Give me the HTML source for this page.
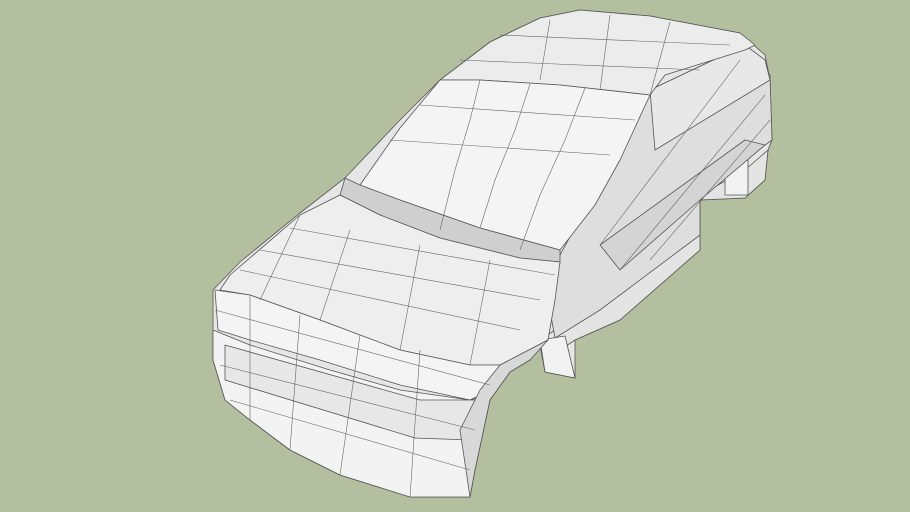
<!DOCTYPE html>
<html><head><meta charset="utf-8"><style>
html,body{margin:0;padding:0;background:#b3bf9e;}
svg{display:block}
</style></head><body>
<svg width="910" height="512" viewBox="0 0 910 512" xmlns="http://www.w3.org/2000/svg">
<rect width="910" height="512" fill="#b3bf9e"/>
<polygon points="213,290 240,262 300,213 345,178 400,120 440,80 490,42 540,18 580,10 650,16 740,33 765,55 770,80 772,140 768,150 765,180 745,198 700,200 700,250 620,320 575,340 575,378 545,372 540,345 530,360 510,372 490,400 475,470 470,497 410,497 340,475 290,450 250,420 225,400 213,360" fill="#e6e6e6" stroke="#555" stroke-width="0.8"/>
<g stroke="#555" stroke-width="0.8" stroke-linejoin="round">
<polygon points="700,195 745,170 768,150 765,180 745,198 700,200 700,250 620,320 575,340 560,350 575,378 545,372 540,340 600,300 700,230" fill="#e4e4e4"/>
<polygon points="725,168 748,160 748,195 725,195" fill="#f2f2f2"/>
<polygon points="540,340 565,336 575,378 545,372" fill="#f2f2f2"/>
<polygon points="560,255 650,90 745,45 770,75 772,140 745,160 700,200 700,235 600,310 555,338 548,300" fill="#dedede"/>
<polygon points="650,90 745,45 765,60 770,80 655,150" fill="#e8e8e8"/>
<polygon points="600,245 745,140 765,145 700,200 620,270" fill="#d4d4d4"/>
<polygon points="440,80 490,42 540,18 580,10 650,16 740,33 755,45 745,50 665,75 650,95 560,85 480,80" fill="#ececec"/>
<polygon points="360,185 400,128 440,80 480,80 560,85 650,95 620,160 595,205 560,250 480,228 400,200" fill="#f4f4f4"/>
<polygon points="345,178 360,185 400,200 480,228 560,250 560,262 520,258 440,238 380,215 340,195" fill="#cfcfcf"/>
<polygon points="230,275 300,215 340,195 380,215 440,238 520,258 560,262 555,300 548,340 500,365 470,365 400,350 320,320 250,295 220,290" fill="#eeeeee"/>
<polygon points="215,290 250,295 320,320 400,350 470,365 500,365 490,390 470,400 400,385 320,360 250,340 218,330" fill="#f4f4f4"/>
<polygon points="213,330 250,345 330,370 400,390 470,400 490,395 475,440 470,497 410,497 340,475 290,450 250,420 225,400 213,360" fill="#f3f3f3"/>
<polygon points="225,345 420,400 480,400 470,440 415,438 225,380" fill="#e7e7e7"/>
<polygon points="500,365 548,340 530,360 510,372 490,400 475,470 470,497 460,430 480,390" fill="#d8d8d8"/>
</g>
<g stroke="#666" stroke-width="0.6" fill="none">
<path d="M480,80 L470,120 L455,170 L440,230"/>
<path d="M530,84 L515,130 L495,180 L480,228"/>
<path d="M585,88 L565,140 L540,195 L520,250"/>
<path d="M390,140 L610,155"/>
<path d="M420,105 L635,120"/>
<path d="M460,60 L700,70"/>
<path d="M500,35 L730,45"/>
<path d="M550,20 L540,80"/>
<path d="M610,15 L600,90"/>
<path d="M670,22 L650,95"/>
<path d="M260,250 L540,300"/>
<path d="M290,228 L555,275"/>
<path d="M240,270 L520,330"/>
<path d="M300,215 L260,300 M350,230 L320,320 M420,245 L400,350 M490,260 L470,365"/>
<path d="M250,295 L250,420 M300,315 L290,450 M360,335 L340,475 M420,350 L410,497"/>
<path d="M215,310 L490,385"/>
<path d="M220,365 L475,430"/>
<path d="M230,400 L470,470"/>
<path d="M600,245 L740,60 M620,270 L765,95 M650,260 L770,120"/>
</g>
</svg>
</body></html>
